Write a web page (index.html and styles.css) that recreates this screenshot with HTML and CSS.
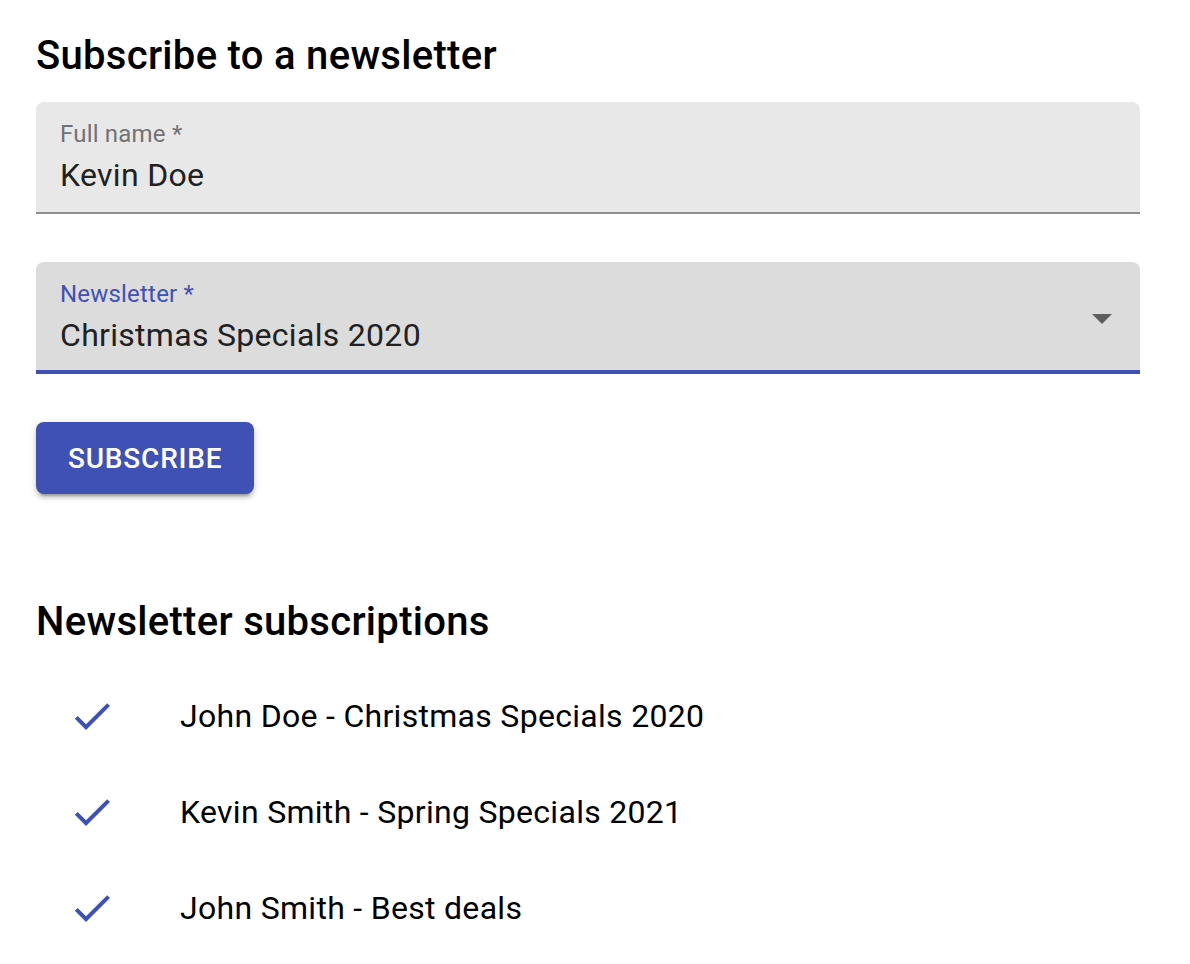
FILE: index.html
```html
<!DOCTYPE html>
<html lang="en">
<head>
<meta charset="utf-8">
<title>Newsletter</title>
<link rel="stylesheet" href="styles.css">
</head>
<body>
<main class="page">
  <h2 class="title">Subscribe to a newsletter</h2>
  <form class="form">
    <div class="field">
      <label class="field-label">Full name *</label>
      <div class="field-value">Kevin Doe</div>
    </div>
    <div class="field field-focused">
      <label class="field-label">Newsletter *</label>
      <div class="field-value">Christmas Specials 2020</div>
      <svg class="select-arrow" viewBox="0 0 24 24" width="48" height="48"><path d="M7 10l5 5 5-5z"/></svg>
    </div>
    <div class="actions">
      <button type="button" class="btn">Subscribe</button>
    </div>
  </form>
  <h2 class="title title-second">Newsletter subscriptions</h2>
  <ul class="list">
    <li class="list-item">
      <span class="list-icon"><svg viewBox="0 0 24 24" width="48" height="48"><path d="M9 16.17L4.83 12l-1.42 1.41L9 19 21 7l-1.41-1.41z"/></svg></span>
      <span class="list-text">John Doe - Christmas Specials 2020</span>
    </li>
    <li class="list-item">
      <span class="list-icon"><svg viewBox="0 0 24 24" width="48" height="48"><path d="M9 16.17L4.83 12l-1.42 1.41L9 19 21 7l-1.41-1.41z"/></svg></span>
      <span class="list-text">Kevin Smith - Spring Specials 2021</span>
    </li>
    <li class="list-item">
      <span class="list-icon"><svg viewBox="0 0 24 24" width="48" height="48"><path d="M9 16.17L4.83 12l-1.42 1.41L9 19 21 7l-1.41-1.41z"/></svg></span>
      <span class="list-text">John Smith - Best deals</span>
    </li>
  </ul>
</main>
</body>
</html>
```

FILE: styles.css
```css
* { box-sizing: border-box; }

html, body {
  margin: 0;
  padding: 0;
  background: #fff;
}

body {
  font-family: Roboto, "Liberation Sans", Arial, sans-serif;
  color: #000;
}

.page {
  width: 1104px;
  margin: 0 0 0 36px;
  padding-top: 24px;
}

.title {
  margin: 0 0 14px 0;
  font-size: 40px;
  font-weight: 500;
  line-height: 64px;
  letter-spacing: 0.3px;
}

.title-second {
  margin-top: 96px;
}

.form {
  display: flex;
  flex-direction: column;
  gap: 48px;
}

.field {
  position: relative;
  height: 112px;
  background: #e8e8e8;
  border-radius: 8px 8px 0 0;
  border-bottom: 2px solid #8f8f8f;
  padding: 20px 24px 0 24px;
}

.field-focused {
  background: #dcdcdc;
  border-bottom: 4px solid #3f51b5;
}

.field-label {
  display: block;
  font-size: 24px;
  line-height: 24px;
  color: #727272;
  letter-spacing: 0.2px;
}

.field-focused .field-label {
  color: #3f51b5;
}

.field-value {
  margin-top: 10px;
  font-size: 32px;
  line-height: 38px;
  color: #212121;
  letter-spacing: 0.3px;
}

.select-arrow {
  position: absolute;
  right: 14px;
  top: 32px;
  fill: #5f5f5f;
}

.actions {
  display: flex;
}

.btn {
  height: 72px;
  padding: 12px 32px;
  border: none;
  border-radius: 8px;
  background: #3f51b5;
  color: #fff;
  font-family: Roboto, "Liberation Sans", Arial, sans-serif;
  font-size: 28px;
  font-weight: 500;
  letter-spacing: 0.8px;
  text-transform: uppercase;
  box-shadow: 0 6px 2px -4px rgba(0,0,0,0.2), 0 4px 4px 0 rgba(0,0,0,0.14), 0 2px 10px 0 rgba(0,0,0,0.12);
  cursor: pointer;
}

.list {
  list-style: none;
  margin: 0;
  padding: 0;
}

.list-item {
  display: flex;
  align-items: center;
  height: 96px;
  padding: 0 32px;
}

.list-icon {
  display: flex;
  width: 112px;
  flex-shrink: 0;
}

.list-icon svg {
  fill: #3f51b5;
}

.list-text {
  font-size: 32px;
  line-height: 48px;
  color: #000;
  letter-spacing: 0.3px;
}
```
